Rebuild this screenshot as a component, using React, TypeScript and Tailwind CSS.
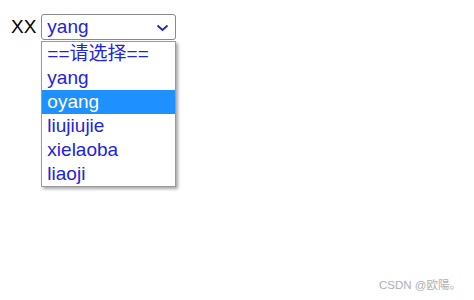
import React from "react";

export default function App() {
  const options = ["==请选择==", "yang", "oyang", "liujiujie", "xielaoba", "liaoji"];
  return (
    <div
      className="relative w-[474px] h-[300px] bg-white overflow-hidden"
      style={{ fontFamily: '"Liberation Sans", Arial, "Noto Sans CJK SC", sans-serif' }}
    >
      <div className="flex items-center pt-[14px] pl-[11px]">
        <span className="text-[19px] leading-[26px] text-black mr-[5px]">XX</span>
        <div className="relative">
          <div className="flex items-center justify-between w-[135px] h-[26px] border border-[#8a8a8a] rounded-[3px] pl-[5px] pr-[6px] bg-white">
            <span className="text-[19px] leading-[22px] text-[#2222e0]">yang</span>
            <svg width="13" height="8" viewBox="0 0 13 8" className="mt-[1px]">
              <path d="M1.5 1.5 L6.5 6 L11.5 1.5" fill="none" stroke="#2222c0" strokeWidth="1.8" />
            </svg>
          </div>
          <div className="absolute left-0 top-[27px] w-[135px] bg-white border border-[#9a9a9a] shadow-[2px_2px_3px_rgba(0,0,0,0.35)] z-10">
            {options.map((o) => (
              <div
                key={o}
                className={`h-[24px] leading-[24px] pl-[5px] text-[19px] ${
                  o === "oyang" ? "bg-[#1e90ff] text-white" : "text-[#2222e0]"
                }`}
              >
                {o}
              </div>
            ))}
          </div>
        </div>
      </div>
      <div className="absolute right-[13px] bottom-[6px] text-[11.5px] text-[#b0b0b0]">
        CSDN @欧陽。
      </div>
    </div>
  );
}
